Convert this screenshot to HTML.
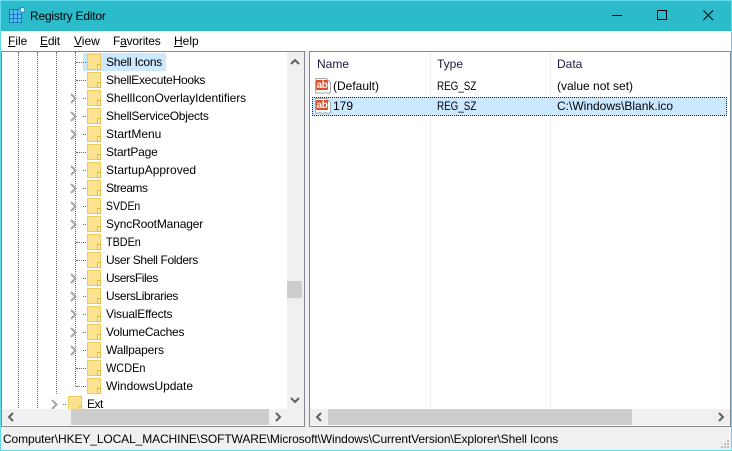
<!DOCTYPE html>
<html><head><meta charset="utf-8">
<style>
html,body{margin:0;padding:0;overflow:hidden}
body{width:732px;height:451px;position:relative;background:#f0f0f0;font:12px "Liberation Sans",sans-serif;color:#000}
div,span,svg{position:absolute;display:block}
u{text-decoration:underline}
.m{top:34px;font-size:12px;line-height:15px;white-space:nowrap}
.r{left:0;width:285px;height:18px}
.t{left:106px;top:2px;line-height:15px;white-space:nowrap}
.f{left:87px;top:1px;width:12px;height:14px;background:#fde28f;border:1px solid #eecb62}
.f:after{content:"";position:absolute;right:-1px;bottom:-1px;width:2px;height:4px;border:1px solid #e3b93f;background:#fff0bd}
.d{left:76px;top:9px;width:10px;border-top:1px dotted #666}
.e{left:83px;top:9px;width:3px;border-top:1px dotted #666}
.c{left:69px;top:3px}
.v{border-left:1px dotted #666;width:0}
.h{top:57px;font-size:12px;line-height:15px;color:#1a1a40}
.x{font-size:12px;line-height:15px;white-space:nowrap}
.n{transform:scaleX(.82);transform-origin:0 0}
</style></head><body>
<div style="left:0;top:0;width:732px;height:451px;background:#f0f0f0"></div>
<!-- title -->
<div style="left:0;top:0;width:732px;height:31px;background:#2bbbcb;border-top:1px solid #5fdcec;box-sizing:border-box"></div>
<div style="left:0;top:0;width:1px;height:451px;background:#5fdcec;z-index:9"></div>
<div style="left:731px;top:0;width:1px;height:451px;background:#5fdcec;z-index:9"></div>
<div style="left:0;top:450px;width:732px;height:1px;background:#5fdcec;z-index:9"></div>
<svg style="left:8px;top:6px" width="19" height="19" viewBox="0 0 19 19"><rect x="1" y="3" width="13" height="14" fill="#5cc1f0"/><path d="M1.500 3v14M5.500 3v14M9.500 3v14M13.500 3v14M1 3.500h13M1 8.500h13M1 12.500h13M1 16.500h13" stroke="#1478c4" stroke-width="1" fill="none"/><circle cx="14.500" cy="4" r="2.500" fill="#d5f1fb" stroke="#1f7fc0"/></svg>
<div style="left:30px;top:8px;font-size:12px;line-height:16px;letter-spacing:-.2px;white-space:nowrap">Registry Editor</div>
<svg style="left:600px;top:0" width="132" height="31" viewBox="0 0 132 31"><path d="M12 15.500h10" stroke="#000" fill="none"/><rect x="57.500" y="10.500" width="9" height="9" stroke="#000" stroke-width="1" fill="none"/><path d="M103.500 10.500l9.500 9.500M113 10.500l-9.500 9.500" stroke="#000" fill="none"/></svg>
<!-- menu -->
<div style="left:1px;top:31px;width:730px;height:20px;background:#fff"></div>
<div class="m" style="left:8px"><u>F</u>ile</div>
<div class="m" style="left:40px;letter-spacing:-.2px"><u>E</u>dit</div>
<div class="m" style="left:74px"><u>V</u>iew</div>
<div class="m" style="left:113px;letter-spacing:-.2px">F<u>a</u>vorites</div>
<div class="m" style="left:174px"><u>H</u>elp</div>
<!-- left pane -->
<div style="left:1px;top:51px;width:302px;height:374px;background:#fff;border:1px solid #828790;overflow:hidden">
  <div style="left:-2px;top:-52px;width:304px;height:426px">
    <div class="v" style="left:18px;top:52px;height:356px"></div>
    <div class="v" style="left:37px;top:52px;height:356px"></div>
    <div class="v" style="left:56px;top:52px;height:342px"></div>
    <div class="v" style="left:75px;top:52px;height:334px"></div>
    <div style="left:83px;top:53px;width:83px;height:18px;background:#cce8ff"></div>

    <div class="r" style="top:53px"><div class="d"></div><div class="f"></div><div class="t" style="letter-spacing:-.24px">Shell Icons</div></div>
    <div class="r" style="top:71px"><div class="d"></div><div class="f"></div><div class="t" style="letter-spacing:-.29px">ShellExecuteHooks</div></div>
    <div class="r" style="top:89px"><svg class="c" width="9" height="13" viewBox="0 0 9 13"><path d="M2 2l4.500 4.500L2 11" stroke="#a6a6a6" stroke-width="2" fill="none"/></svg><div class="e"></div><div class="f"></div><div class="t" style="letter-spacing:-.1px">ShellIconOverlayIdentifiers</div></div>
    <div class="r" style="top:107px"><svg class="c" width="9" height="13" viewBox="0 0 9 13"><path d="M2 2l4.500 4.500L2 11" stroke="#a6a6a6" stroke-width="2" fill="none"/></svg><div class="e"></div><div class="f"></div><div class="t" style="letter-spacing:-.25px">ShellServiceObjects</div></div>
    <div class="r" style="top:125px"><svg class="c" width="9" height="13" viewBox="0 0 9 13"><path d="M2 2l4.500 4.500L2 11" stroke="#a6a6a6" stroke-width="2" fill="none"/></svg><div class="e"></div><div class="f"></div><div class="t">StartMenu</div></div>
    <div class="r" style="top:143px"><div class="d"></div><div class="f"></div><div class="t" style="letter-spacing:-.2px">StartPage</div></div>
    <div class="r" style="top:161px"><svg class="c" width="9" height="13" viewBox="0 0 9 13"><path d="M2 2l4.500 4.500L2 11" stroke="#a6a6a6" stroke-width="2" fill="none"/></svg><div class="e"></div><div class="f"></div><div class="t">StartupApproved</div></div>
    <div class="r" style="top:179px"><svg class="c" width="9" height="13" viewBox="0 0 9 13"><path d="M2 2l4.500 4.500L2 11" stroke="#a6a6a6" stroke-width="2" fill="none"/></svg><div class="e"></div><div class="f"></div><div class="t" style="letter-spacing:-.45px">Streams</div></div>
    <div class="r" style="top:197px"><svg class="c" width="9" height="13" viewBox="0 0 9 13"><path d="M2 2l4.500 4.500L2 11" stroke="#a6a6a6" stroke-width="2" fill="none"/></svg><div class="e"></div><div class="f"></div><div class="t n" style="transform:scaleX(.87)">SVDEn</div></div>
    <div class="r" style="top:215px"><svg class="c" width="9" height="13" viewBox="0 0 9 13"><path d="M2 2l4.500 4.500L2 11" stroke="#a6a6a6" stroke-width="2" fill="none"/></svg><div class="e"></div><div class="f"></div><div class="t" style="letter-spacing:-.15px">SyncRootManager</div></div>
    <div class="r" style="top:233px"><div class="d"></div><div class="f"></div><div class="t n" style="transform:scaleX(.9)">TBDEn</div></div>
    <div class="r" style="top:251px"><div class="d"></div><div class="f"></div><div class="t" style="letter-spacing:-.38px">User Shell Folders</div></div>
    <div class="r" style="top:269px"><svg class="c" width="9" height="13" viewBox="0 0 9 13"><path d="M2 2l4.500 4.500L2 11" stroke="#a6a6a6" stroke-width="2" fill="none"/></svg><div class="e"></div><div class="f"></div><div class="t" style="letter-spacing:-.48px">UsersFiles</div></div>
    <div class="r" style="top:287px"><svg class="c" width="9" height="13" viewBox="0 0 9 13"><path d="M2 2l4.500 4.500L2 11" stroke="#a6a6a6" stroke-width="2" fill="none"/></svg><div class="e"></div><div class="f"></div><div class="t" style="letter-spacing:-.38px">UsersLibraries</div></div>
    <div class="r" style="top:305px"><svg class="c" width="9" height="13" viewBox="0 0 9 13"><path d="M2 2l4.500 4.500L2 11" stroke="#a6a6a6" stroke-width="2" fill="none"/></svg><div class="e"></div><div class="f"></div><div class="t" style="letter-spacing:-.2px">VisualEffects</div></div>
    <div class="r" style="top:323px"><svg class="c" width="9" height="13" viewBox="0 0 9 13"><path d="M2 2l4.500 4.500L2 11" stroke="#a6a6a6" stroke-width="2" fill="none"/></svg><div class="e"></div><div class="f"></div><div class="t" style="letter-spacing:-.2px">VolumeCaches</div></div>
    <div class="r" style="top:341px"><svg class="c" width="9" height="13" viewBox="0 0 9 13"><path d="M2 2l4.500 4.500L2 11" stroke="#a6a6a6" stroke-width="2" fill="none"/></svg><div class="e"></div><div class="f"></div><div class="t" style="letter-spacing:-.18px">Wallpapers</div></div>
    <div class="r" style="top:359px"><div class="d"></div><div class="f"></div><div class="t n" style="transform:scaleX(.91)">WCDEn</div></div>
    <div class="r" style="top:377px"><div class="d"></div><div class="f"></div><div class="t" style="letter-spacing:-.03px">WindowsUpdate</div></div>
    <div class="r" style="top:395px"><svg class="c" style="left:50px" width="9" height="13" viewBox="0 0 9 13"><path d="M2 2l4.500 4.500L2 11" stroke="#a6a6a6" stroke-width="2" fill="none"/></svg><div class="e" style="left:63px"></div><div class="f" style="left:68px"></div><div class="t" style="left:87px;letter-spacing:-.5px">Ext</div></div>
  </div>
</div>
<!-- left v scrollbar -->
<div style="left:287px;top:52px;width:17px;height:357px;background:#f0f0f0"></div>
<div style="left:287px;top:281px;width:15px;height:17px;background:#cdcdcd"></div>
<svg style="left:287px;top:54px" width="16" height="16" viewBox="0 0 16 16"><path d="M4 10l4-4 4 4" stroke="#606060" stroke-width="2" fill="none"/></svg>
<svg style="left:287px;top:392px" width="16" height="16" viewBox="0 0 16 16"><path d="M4 6l4 4 4-4" stroke="#606060" stroke-width="2" fill="none"/></svg>
<!-- left h scrollbar -->
<div style="left:2px;top:409px;width:302px;height:16px;background:#f0f0f0"></div>
<div style="left:71px;top:409px;width:198px;height:16px;background:#cdcdcd"></div>
<svg style="left:3px;top:409px" width="16" height="16" viewBox="0 0 16 16"><path d="M10 4L6 8l4 4" stroke="#606060" stroke-width="2" fill="none"/></svg>
<svg style="left:270px;top:409px" width="16" height="16" viewBox="0 0 16 16"><path d="M6 4l4 4-4 4" stroke="#606060" stroke-width="2" fill="none"/></svg>
<!-- right pane -->
<div style="left:309px;top:51px;width:420px;height:374px;background:#fff;border:1px solid #828790"></div>
<div style="left:430px;top:52px;width:1px;height:356px;background:#eef0f4"></div>
<div style="left:550px;top:52px;width:1px;height:356px;background:#eef0f4"></div>
<div class="x h" style="left:317px">Name</div>
<div class="x h" style="left:437px">Type</div>
<div class="x h" style="left:557px">Data</div>
<!-- selected row -->
<div style="left:312px;top:97px;width:413px;height:17px;background:#cce8ff;border:1px dotted #222"></div>
<!-- ab icons -->
<svg style="left:315px;top:78px" width="16" height="16" viewBox="0 0 16 16"><path d="M.5 .5h11l4 4v10l-2 1-3-1-3 1-3-1-3 1-1-1z" fill="#fff" stroke="#a9a9a9"/><rect x="1" y="2" width="12" height="10" rx="1" fill="#d9502e"/><text x="1.500" y="10" font-family="Liberation Sans" font-size="10" font-weight="700" fill="#fff" letter-spacing="-.3">ab</text></svg>
<svg style="left:315px;top:98px" width="16" height="16" viewBox="0 0 16 16"><path d="M.5 .5h11l4 4v10l-2 1-3-1-3 1-3-1-3 1-1-1z" fill="#fff" stroke="#a9a9a9"/><rect x="1" y="2" width="12" height="10" rx="1" fill="#d9502e"/><text x="1.500" y="10" font-family="Liberation Sans" font-size="10" font-weight="700" fill="#fff" letter-spacing="-.3">ab</text></svg>
<div class="x" style="left:333px;top:79px">(Default)</div>
<div class="x n" style="left:437px;top:79px">REG_SZ</div>
<div class="x" style="left:557px;top:79px">(value not set)</div>
<div class="x" style="left:333px;top:99px">179</div>
<div class="x n" style="left:437px;top:99px">REG_SZ</div>
<div class="x" style="left:557px;top:99px">C:\Windows\Blank.ico</div>
<!-- right h scrollbar -->
<div style="left:310px;top:409px;width:420px;height:16px;background:#f0f0f0"></div>
<div style="left:328px;top:409px;width:304px;height:16px;background:#cdcdcd"></div>
<svg style="left:311px;top:409px" width="16" height="16" viewBox="0 0 16 16"><path d="M10 4L6 8l4 4" stroke="#606060" stroke-width="2" fill="none"/></svg>
<svg style="left:713px;top:409px" width="16" height="16" viewBox="0 0 16 16"><path d="M6 4l4 4-4 4" stroke="#606060" stroke-width="2" fill="none"/></svg>
<!-- status -->
<div style="left:3px;top:432px;line-height:15px;white-space:nowrap;letter-spacing:-.11px">Computer\HKEY_LOCAL_MACHINE\SOFTWARE\Microsoft\Windows\CurrentVersion\Explorer\Shell Icons</div>
<svg style="left:720px;top:439px" width="10" height="10" viewBox="0 0 10 10"><path d="M7 1h2v2H7zM4 4h2v2H4zM7 4h2v2H7zM1 7h2v2H1zM4 7h2v2H4zM7 7h2v2H7z" fill="#bdbdbd"/></svg>
</body></html>
